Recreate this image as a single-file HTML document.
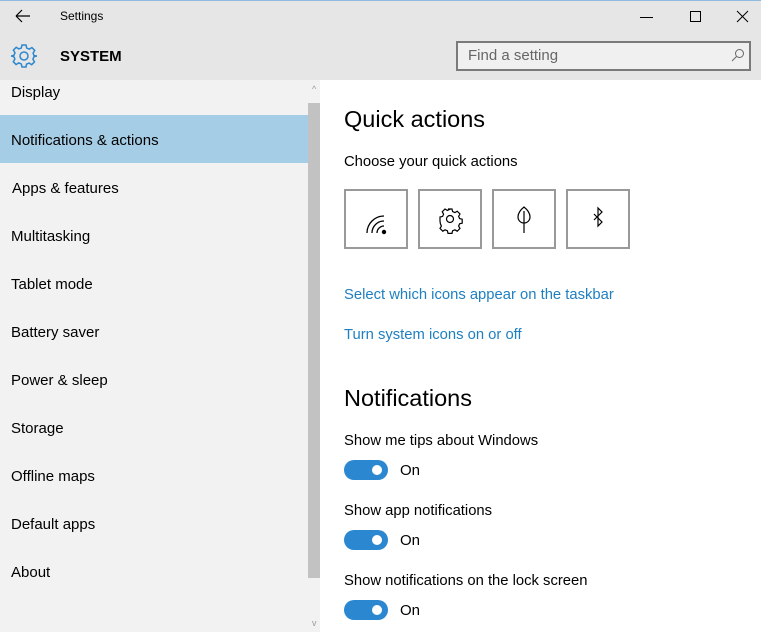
<!DOCTYPE html>
<html><head><style>
*{margin:0;padding:0;box-sizing:border-box}
body{width:761px;height:632px;overflow:hidden;background:#fff;font-family:"Liberation Sans",sans-serif;position:relative;color:#000}
.a{position:absolute}
.hdr{left:0;top:0;width:761px;height:80px;background:#e6e6e6;border-top:1px solid #8fbbe0}
.side{left:0;top:80px;width:320px;height:552px;background:#f2f2f2}
.item{position:absolute;left:11px;font-size:15px;color:#000}
.sel{left:0;top:115px;width:308px;height:48px;background:#a6cde6}
.qa{position:absolute;top:189px;width:64px;height:60px;border:2px solid #999;background:#fff}
.link{position:absolute;left:344px;font-size:14.8px;color:#1e7fc1}
.tog{position:absolute;left:344px;width:44px;height:20px;border-radius:10px;background:#2b88d0}
.tog:after{content:"";position:absolute;right:6px;top:5px;width:10px;height:10px;border-radius:50%;background:#fff}
.lbl{position:absolute;left:344px;font-size:14.8px}
.on{position:absolute;left:400px;font-size:15px}
</style></head><body>
<div class="a hdr"></div>
<svg class="a" style="left:15px;top:9px" width="16" height="14"><path d="M1 7H15M1 7L7 1M1 7L7 13" stroke="#000" stroke-width="1.2" fill="none"/></svg>
<div class="a" style="left:60px;top:9px;font-size:12px">Settings</div>
<svg class="a" style="left:640px;top:10px" width="120" height="14"><path d="M0 7.5H13" stroke="#000"/><rect x="50.5" y="1.5" width="10" height="10" stroke="#000" fill="none"/><path d="M97 1L108 12M108 1L97 12" stroke="#000"/></svg>
<svg class="a" style="left:11px;top:43px" width="26" height="26" viewBox="0 0 26 26"><g fill="none" stroke="#2b88d0" stroke-width="1.5"><circle cx="13" cy="13" r="4"/><path d="M11 2h4l.7 3 2.5 1.2 2.7-1.6 2.8 2.8-1.6 2.7L23 12.6l3 .4v0l-3 .7-1.1 2.5 1.6 2.7-2.8 2.8-2.7-1.6-2.5 1.1L15 24h-4l-.7-3-2.5-1.1-2.7 1.6-2.8-2.8 1.6-2.7L2.8 13.6 0 13v0l2.9-.7L4 9.8 2.4 7.1l2.8-2.8 2.7 1.6L10.3 5z"/></g></svg>
<div class="a" style="left:60px;top:48px;font-size:15px;font-weight:bold">SYSTEM</div>
<div class="a" style="left:456px;top:41px;width:295px;height:30px;border:2px solid #7a7a7a;background:#f0f0f0"></div>
<div class="a" style="left:468px;top:47px;font-size:15px;color:#666">Find a setting</div>
<svg class="a" style="left:731px;top:48px" width="14" height="14"><circle cx="8.5" cy="5.5" r="4" stroke="#666" fill="none"/><path d="M5.5 8.5L1 13" stroke="#666"/></svg>
<div class="a side"></div>
<div class="a sel"></div>
<div class="a" style="left:308px;top:103px;width:12px;height:475px;background:#c2c2c2"></div>
<div class="a" style="left:312px;top:84px;font-size:9px;color:#999">^</div>
<div class="a" style="left:312px;top:618px;font-size:9px;color:#999">v</div>
<div class="item" style="top:84px">Display</div>
<div class="item" style="top:132px">Notifications &amp; actions</div>
<div class="item" style="top:180px;left:12px">Apps &amp; features</div>
<div class="item" style="top:228px">Multitasking</div>
<div class="item" style="top:276px">Tablet mode</div>
<div class="item" style="top:324px">Battery saver</div>
<div class="item" style="top:372px">Power &amp; sleep</div>
<div class="item" style="top:420px">Storage</div>
<div class="item" style="top:468px">Offline maps</div>
<div class="item" style="top:516px">Default apps</div>
<div class="item" style="top:564px">About</div>
<div class="a" style="left:344px;top:106px;font-size:23.5px">Quick actions</div>
<div class="lbl" style="top:154px">Choose your quick actions</div>
<div class="qa" style="left:344px"><svg width="60" height="56"><g fill="none" stroke="#000" stroke-width="1.3"><path d="M21 42a17 17 0 0 1 17-17M26 42a12 12 0 0 1 12-12M31 42a7 7 0 0 1 7-7"/></g><circle cx="38" cy="41" r="2.2" fill="#000"/></svg></div>
<div class="qa" style="left:418px"><svg width="60" height="56" viewBox="-17 -15 60 56"><g fill="none" stroke="#000" stroke-width="1.2"><circle cx="13" cy="13" r="3.5"/><path d="M11 3h4l.6 2.6 2.3 1 2.3-1.4 2.8 2.8-1.4 2.3 1 2.3 2.6.6v4l-2.6.6-1 2.3 1.4 2.3-2.8 2.8-2.3-1.4-2.3 1-.6 2.6h-4l-.6-2.6-2.3-1-2.3 1.4-2.8-2.8 1.4-2.3-1-2.3L3 15v-4l2.6-.6 1-2.3-1.4-2.3 2.8-2.8 2.3 1.4 2.3-1z"/></g></svg></div>
<div class="qa" style="left:492px"><svg width="60" height="56"><g fill="none" stroke="#000" stroke-width="1.2"><path d="M30 16c-5 4-6 8-6 10a6 6 0 0 0 12 0c0-2-1-6-6-10z"/><path d="M30 20v22"/></g></svg></div>
<div class="qa" style="left:566px"><svg width="60" height="56"><path d="M26 23l8 8-4 4V17l4 4-8 8" fill="none" stroke="#000" stroke-width="1.2"/></svg></div>
<div class="link" style="top:287px">Select which icons appear on the taskbar</div>
<div class="link" style="top:327px">Turn system icons on or off</div>
<div class="a" style="left:344px;top:385px;font-size:23.5px">Notifications</div>
<div class="lbl" style="top:433px">Show me tips about Windows</div>
<div class="tog" style="top:460px"></div><div class="on" style="top:462px">On</div>
<div class="lbl" style="top:503px">Show app notifications</div>
<div class="tog" style="top:530px"></div><div class="on" style="top:532px">On</div>
<div class="lbl" style="top:573px">Show notifications on the lock screen</div>
<div class="tog" style="top:600px"></div><div class="on" style="top:602px">On</div>
</body></html>
